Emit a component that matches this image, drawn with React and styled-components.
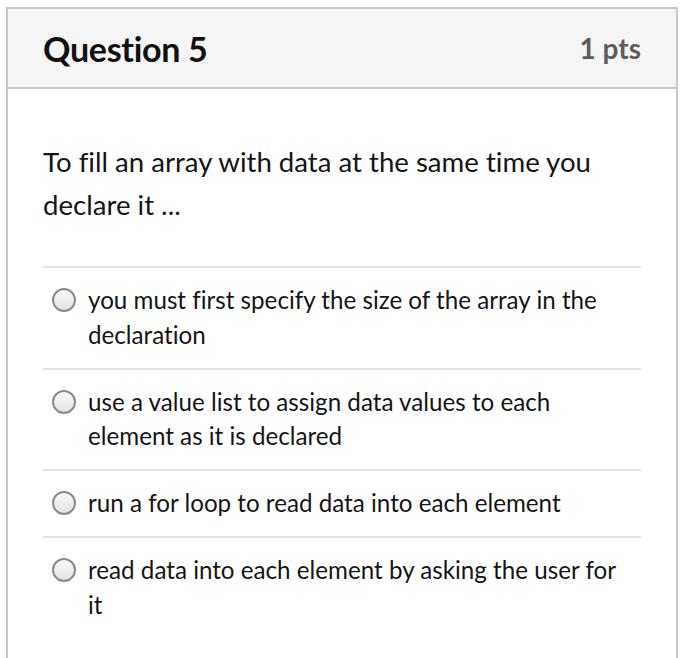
import React from 'react';
import styled, {createGlobalStyle} from 'styled-components';

const GlobalStyle = createGlobalStyle`
    body {
        margin: 0;
        background: #ffffff;
        font-family: Lato, "Open Sans", sans-serif;
        font-variant-ligatures: no-common-ligatures;
    }
`;

const Card = styled.div`
    margin: 7px 0 0 6px;
    width: 672px;
    height: 651px;
    box-sizing: border-box;
    border: 2px solid #c8c8c8;
    border-bottom: none;
    background: #ffffff;
    overflow: hidden;
`;

const Header = styled.div`
    display: flex;
    justify-content: space-between;
    align-items: center;
    height: 78px;
    padding: 0 35px;
    background: #f5f5f5;
    border-bottom: 2px solid #c8c8c8;
`;

const Title = styled.h2`
    margin: 0;
    font-family: Lato, sans-serif;
    font-weight: 700;
    font-size: 34px;
    color: #111;
    letter-spacing: -0.3px;
`;

const Points = styled.span`
    font-family: Lato, sans-serif;
    font-weight: 700;
    font-size: 28px;
    color: #5d5d5d;
`;

const Body = styled.div`
    padding: 51px 35px 0;
`;

const QuestionText = styled.p`
    margin: 0 0 40px;
    font-family: Lato, sans-serif;
    font-size: 27.6px;
    line-height: 43px;
    color: #151515;
`;

const Answers = styled.div`
    display: flex;
    flex-direction: column;
`;

const Answer = styled.label`
    display: flex;
    align-items: flex-start;
    gap: 12px;
    padding: 15px 12px 15.5px 9px;
    border-top: 2px solid #e4e4e4;
    font-family: Lato, sans-serif;
    font-size: 24.2px;
    line-height: 34.5px;
    color: #151515;
`;

const Radio = styled.span`
    flex: none;
    width: 24px;
    height: 24px;
    margin-top: 5px;
    box-sizing: border-box;
    border-radius: 50%;
    border: 2px solid #8a8a8a;
    background: linear-gradient(#fafafa, #e2e2e2);
`;

const answers = [
    'you must first specify the size of the array in the declaration',
    'use a value list to assign data values to each element as it is declared',
    'run a for loop to read data into each element',
    'read data into each element by asking the user for it',
];

function App() {
    return <>
        <GlobalStyle/>
        <Card>
            <Header>
                <Title>Question 5</Title>
                <Points>1 pts</Points>
            </Header>
            <Body>
                <QuestionText>
                    To fill an array with data at the same time you<br/>declare it ...
                </QuestionText>
                <Answers>
                    {answers.map((text) => (
                        <Answer key={text}>
                            <Radio/>
                            <span>{text}</span>
                        </Answer>
                    ))}
                </Answers>
            </Body>
        </Card>
    </>;
}

export default App;
